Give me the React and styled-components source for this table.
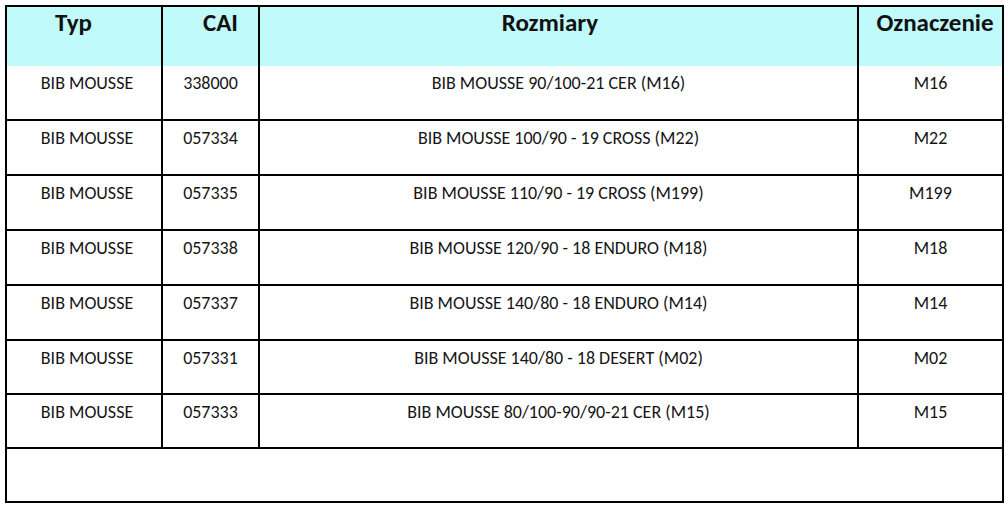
import React from 'react';
import styled, { createGlobalStyle } from 'styled-components';

const GlobalStyle = createGlobalStyle`
  html, body {
    margin: 0;
    padding: 0;
    background: #ffffff;
  }
  body {
    font-family: Carlito, Lato, "Liberation Sans", sans-serif;
    color: #111111;
  }
`;

const Page = styled.div`
  padding: 5px 0 0 5px;
  width: 1006px;
  height: 510px;
  box-sizing: border-box;
`;

const Table = styled.table`
  border-collapse: collapse;
  table-layout: fixed;
  width: 997px;
  border: 2px solid #000;
`;

const HeadRow = styled.tr`
  height: 60px;
  background: #c0fafa;
`;

const HeadCell = styled.th`
  border-left: 2px solid #000;
  border-right: 2px solid #000;
  padding: 1px ${(p) => p.$pr || 0}px 0 ${(p) => p.$pl || 0}px;
  vertical-align: top;
  text-align: center;
  font-size: 25px;
  line-height: 30px;
  font-weight: 700;
  color: #111;
`;

const Row = styled.tr`
  height: ${(p) => p.$h || 55}px;
`;

const Cell = styled.td`
  border: 2px solid #000;
  border-top: ${(p) => (p.$first ? 'none' : '2px solid #000')};
  padding: 6px 0 0 ${(p) => p.$pl || 0}px;
  vertical-align: top;
  text-align: center;
  font-size: 18px;
  line-height: 22px;
  color: #151515;
`;

const rows = [
  ['338000', 'BIB MOUSSE 90/100-21 CER (M16)', 'M16', 54],
  ['057334', 'BIB MOUSSE 100/90 - 19 CROSS (M22)', 'M22', 55],
  ['057335', 'BIB MOUSSE 110/90 - 19 CROSS (M199)', 'M199', 55],
  ['057338', 'BIB MOUSSE 120/90 - 18 ENDURO (M18)', 'M18', 55],
  ['057337', 'BIB MOUSSE 140/80 - 18 ENDURO (M14)', 'M14', 55],
  ['057331', 'BIB MOUSSE 140/80 - 18 DESERT (M02)', 'M02', 54],
  ['057333', 'BIB MOUSSE 80/100-90/90-21 CER (M15)', 'M15', 54],
];

export default function App() {
  return (
    <>
      <GlobalStyle />
      <Page>
        <Table>
          <colgroup>
            <col style={{ width: 156 }} />
            <col style={{ width: 97 }} />
            <col style={{ width: 599 }} />
            <col style={{ width: 145 }} />
          </colgroup>
          <thead>
            <HeadRow>
              <HeadCell $pr={21}>Typ</HeadCell>
              <HeadCell $pl={20}>CAI</HeadCell>
              <HeadCell $pr={17}>Rozmiary</HeadCell>
              <HeadCell $pl={9}>Oznaczenie</HeadCell>
            </HeadRow>
          </thead>
          <tbody>
            {rows.map(([cai, size, mark, h], i) => (
              <Row key={cai} $h={h}>
                <Cell $first={i === 0} $pl={6}>BIB MOUSSE</Cell>
                <Cell $first={i === 0}>{cai}</Cell>
                <Cell $first={i === 0}>{size}</Cell>
                <Cell $first={i === 0}>{mark}</Cell>
              </Row>
            ))}
            <Row $h={54}>
              <Cell colSpan={4} />
            </Row>
          </tbody>
        </Table>
      </Page>
    </>
  );
}
